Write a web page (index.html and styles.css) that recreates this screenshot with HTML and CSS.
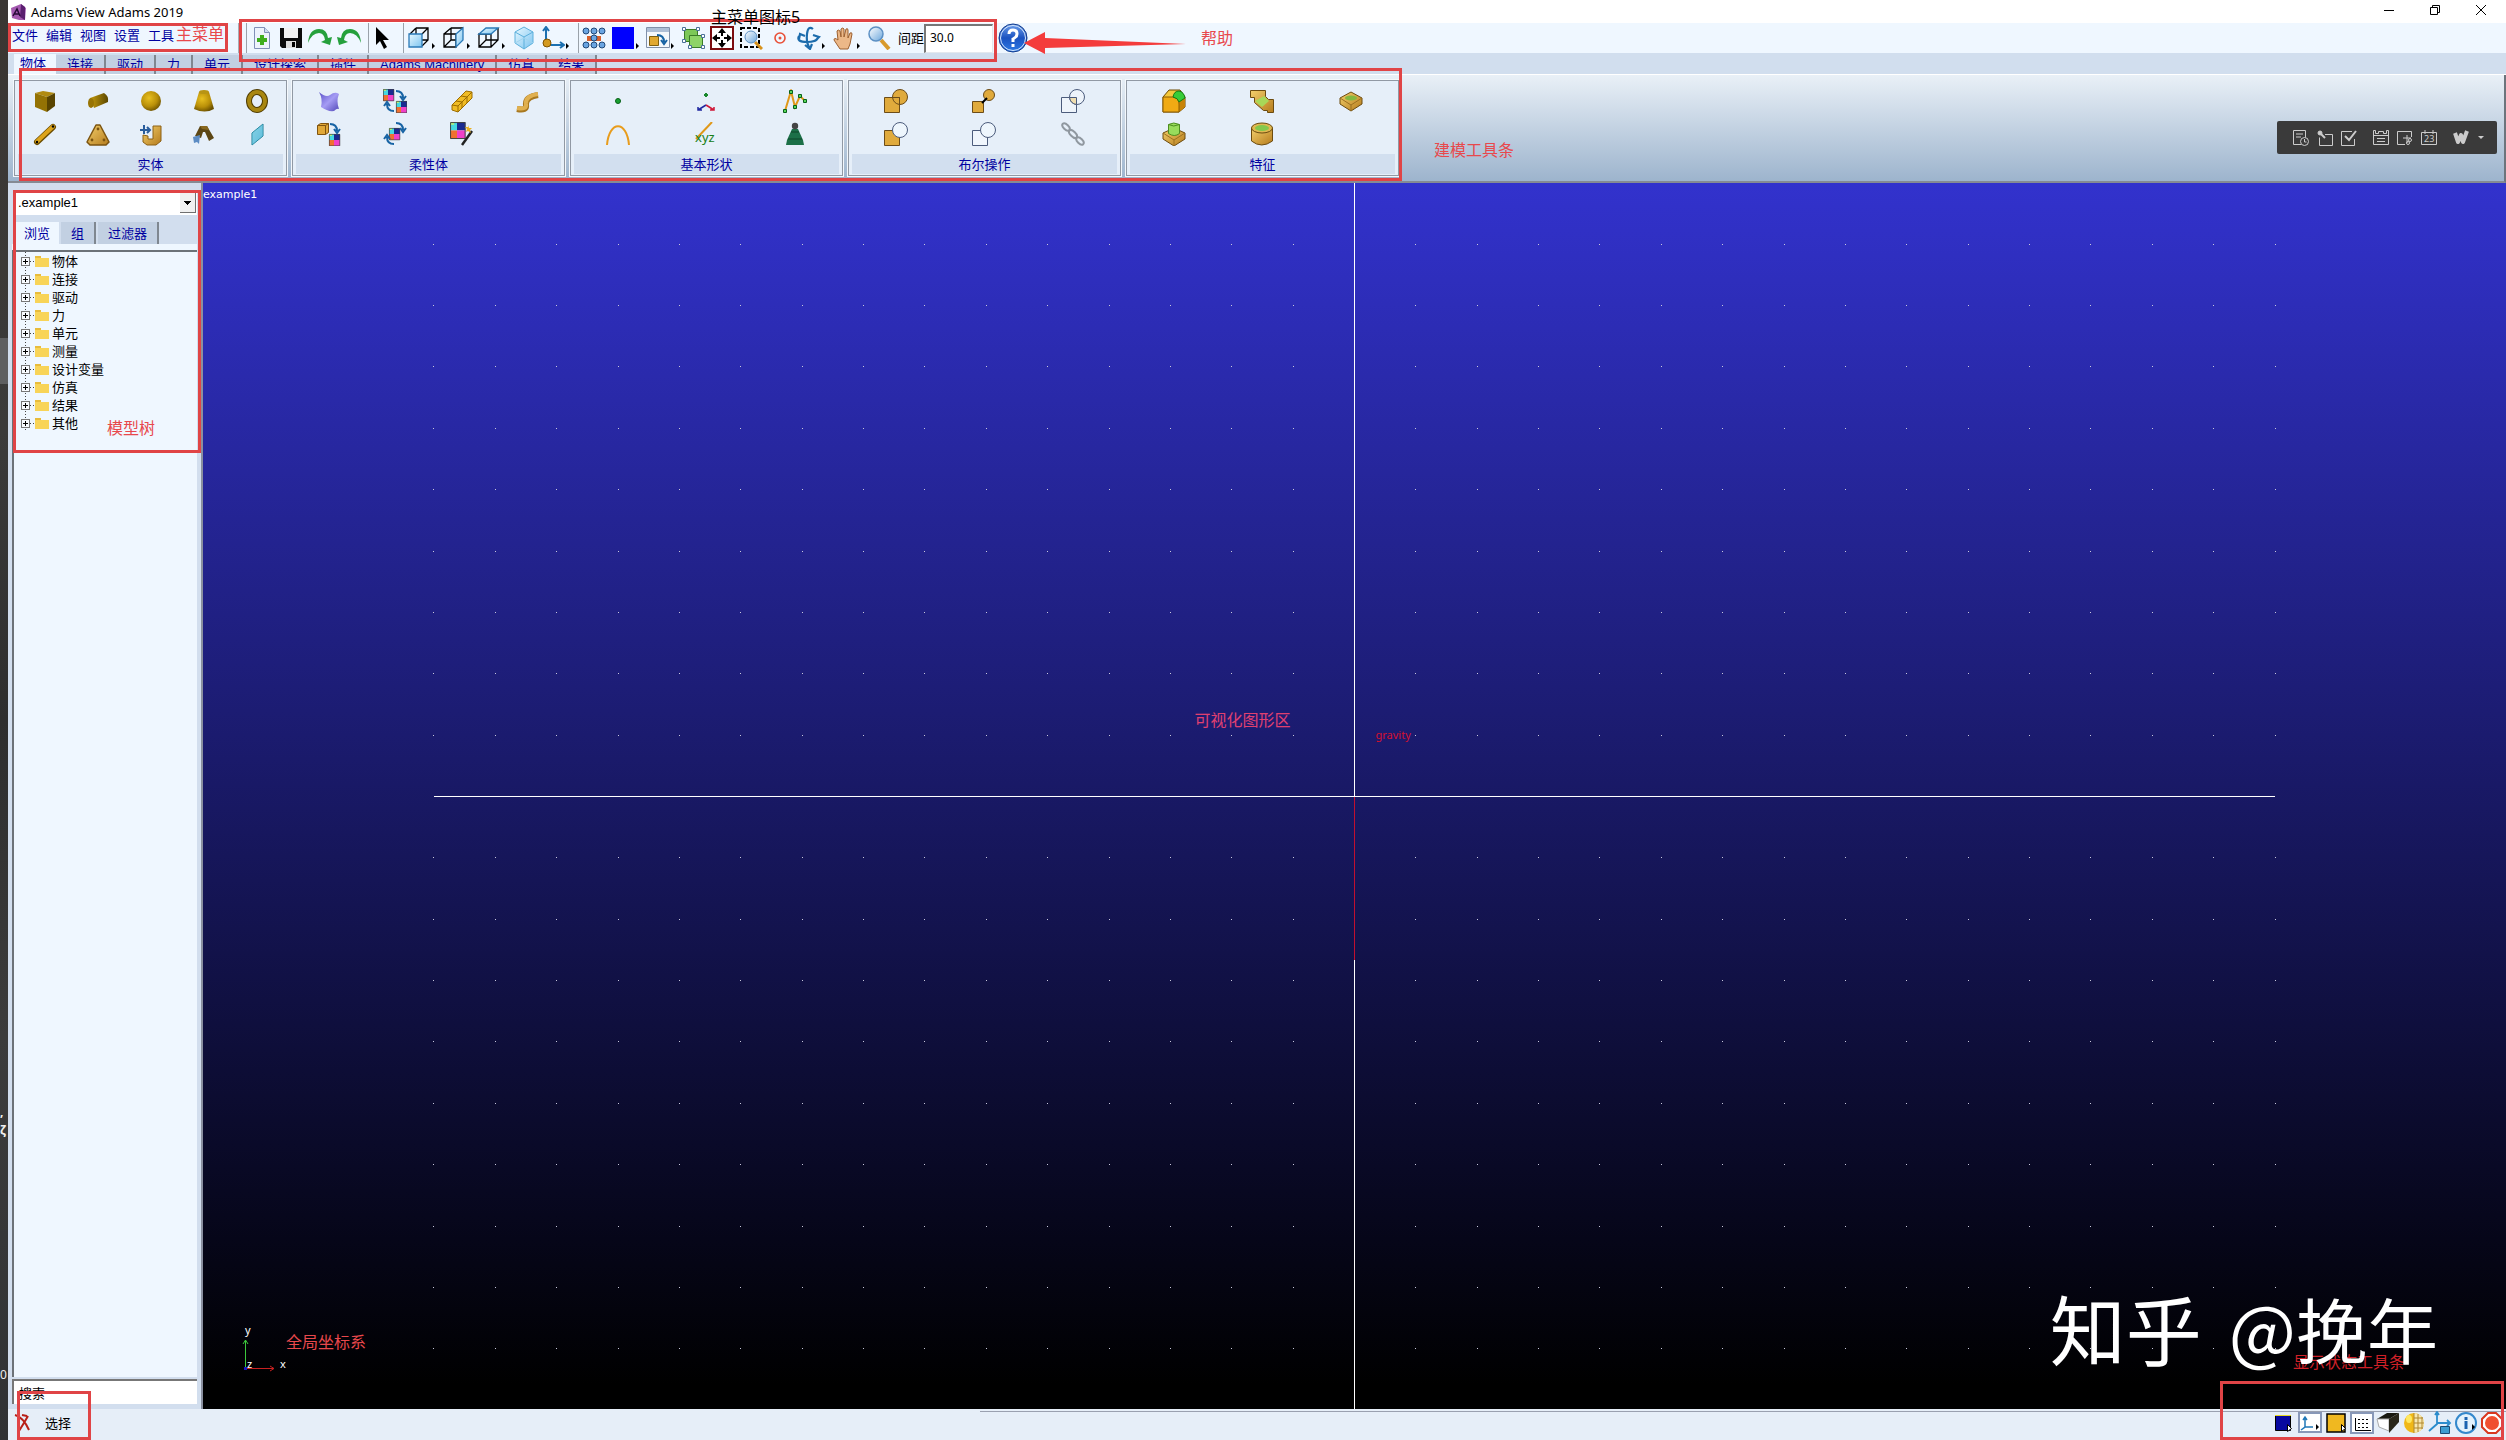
FILE: index.html
```html
<!DOCTYPE html>
<html lang="zh-CN">
<head>
<meta charset="utf-8">
<title>Adams View Adams 2019</title>
<link rel="stylesheet" href="styles.css">
</head>
<body>
<svg class="defs" width="0" height="0" aria-hidden="true">
  <defs>
    <linearGradient id="gold" x1="0" y1="0" x2="1" y2="0"><stop offset="0" stop-color="#c39a0c"/><stop offset="1" stop-color="#5c4700"/></linearGradient>
    <radialGradient id="goldball" cx=".4" cy=".35" r=".7"><stop offset="0" stop-color="#e8c020"/><stop offset=".6" stop-color="#b98f08"/><stop offset="1" stop-color="#6a5000"/></radialGradient>
    <linearGradient id="tan" x1="0" y1="0" x2="1" y2="1"><stop offset="0" stop-color="#f3cf6c"/><stop offset="1" stop-color="#b57b1c"/></linearGradient>
    <linearGradient id="ice" x1="0" y1="0" x2="1" y2="1"><stop offset="0" stop-color="#e8f8ff"/><stop offset="1" stop-color="#7cc4f0"/></linearGradient>
    <linearGradient id="violet" x1="0" y1="0" x2="1" y2="1"><stop offset="0" stop-color="#5a50c8"/><stop offset=".5" stop-color="#a59cf4"/><stop offset="1" stop-color="#5248b8"/></linearGradient>
    <linearGradient id="lens" x1="0" y1="0" x2="1" y2="1"><stop offset="0" stop-color="#ffffff"/><stop offset="1" stop-color="#6aa6dc"/></linearGradient>
    <linearGradient id="helpblue" x1="0" y1="0" x2="0" y2="1"><stop offset="0" stop-color="#6ea0ec"/><stop offset=".5" stop-color="#1b52c0"/><stop offset="1" stop-color="#2f7be6"/></linearGradient>
    <g id="mosaic"><path fill="#45d8e0" d="M0 0h5v6H0z"/><path fill="#1a2a90" d="M5 0h6v6H5z"/><path fill="#f07030" d="M0 6h5v6H0z"/><path fill="#f040c8" d="M5 6h6v6H5z"/><path fill="#b0f080" d="M0 0h3v2H0z"/><path fill="none" stroke="#444" stroke-width=".7" d="M.4.4h10.400v11.400H.4z"/></g>
    <path id="cw" fill="none" stroke="#1763a4" stroke-width="2" d="M0 1q7 0 7 7M4 6l3 4 3-4"/>
  </defs>
</svg>

<aside class="edge" aria-hidden="true"><i class="edge-thumb"></i><span class="edge-a">,</span><span class="edge-b">ζ</span><span class="edge-c">0</span></aside>

<div class="app">
  <header class="titlebar">
    <svg width="16" height="18" viewBox="0 0 16 18"><path fill="#a45ab0" d="M1 5l10-4 5 4-1 12-6 0-7-2z"/><path fill="#5b1f70" d="M11 1l4 3v13l-5-3z"/><path fill="none" stroke="#260a35" stroke-width="1.500" d="M3 13l4-7 3 7M4 11h5"/></svg>
    <h1>Adams View Adams 2019</h1>
    <div class="window-controls">
      <button aria-label="最小化"><svg width="12" height="12"><path d="M1 6.500h10" stroke="#000"/></svg></button>
      <button aria-label="还原"><svg width="12" height="12" fill="none" stroke="#000"><path d="M1.500 3.500h7v7h-7zM3.500 3.500v-2h7v7h-2"/></svg></button>
      <button aria-label="关闭"><svg width="12" height="12" fill="none" stroke="#000"><path d="M1 1l10 10M11 1L1 11"/></svg></button>
    </div>
  </header>

  <div class="menurow">
    <nav class="menu"><button>文件</button><button>编辑</button><button>视图</button><button>设置</button><button>工具</button></nav>
    <div class="toolbar">
      <div class="tools">
        <button aria-label="新建"><svg viewBox="0 0 24 24"><path fill="#edf3fc" stroke="#8090b8" d="M4.500 1.500h10l5 5v16h-15z"/><path fill="#cfdcf0" stroke="#8090b8" d="M14.500 1.500v5h5"/><path stroke="#3fae1e" stroke-width="4" d="M12 9v10M7 14h10"/></svg></button>
        <button aria-label="保存"><svg viewBox="0 0 24 24"><path fill="#0c0c0c" d="M1 2h22v20H3l-2-2z"/><path fill="#f2f2f2" d="M5 2h14v10H5z"/><path fill="#ddd" d="M7 15h10v7H7z"/><path fill="#000" d="M13 16h3v5h-3z"/></svg></button>
        <button aria-label="重做"><svg viewBox="0 0 24 24"><path fill="#25a03c" d="M0 17Q1 3 11 3q8 0 9 9l4-1-2 8-9-3 4-2q-1-7-6-7Q4 7 0 17z"/></svg></button>
        <button aria-label="撤销"><svg viewBox="0 0 24 24"><path fill="#25a03c" d="M24 17Q23 3 13 3q-8 0-9 9l-4-1 2 8 9-3-4-2q1-7 6-7 7 0 11 10z"/></svg></button>
      </div>
      <div class="tools">
        <button aria-label="选择"><svg viewBox="0 0 24 24"><path d="M4 1v18l4-4 4 8 3-2-4-7h6z"/></svg></button>
      </div>
      <div class="tools">
        <button class="drop" aria-label="前视图"><svg viewBox="0 0 24 24"><path fill="none" stroke="#000" stroke-width="1.300" d="M9 2h12v12l-6 6M21 2l-6 6M9 2L3 8M9 2v12h12M9 14l-6 6"/><path fill="url(#ice)" stroke="#2a7ab8" stroke-width="1.300" d="M2 8h13v13H2z"/></svg></button>
        <button class="drop" aria-label="右视图"><svg viewBox="0 0 24 24"><path fill="none" stroke="#000" stroke-width="1.300" d="M2 8h12v13H2zM9 2L2 8M9 2v12h12M9 14l-7 7M9 2h12"/><path fill="url(#ice)" stroke="#2a7ab8" stroke-width="1.300" d="M14 8l7-6v12l-7 7z"/></svg></button>
        <button class="drop" aria-label="顶视图"><svg viewBox="0 0 24 24"><path fill="none" stroke="#000" stroke-width="1.300" d="M2 8h12v13H2zM9 2v12h12M9 14l-7 7M21 2v12l-7 7"/><path fill="url(#ice)" stroke="#2a7ab8" stroke-width="1.300" d="M2 8l7-6h12l-7 6z"/></svg></button>
        <button aria-label="等轴视图"><svg viewBox="0 0 24 24"><path fill="url(#ice)" stroke="#5cb0dc" d="M12 1l9 5v11l-9 6-9-6V6z"/><path fill="none" stroke="#5cb0dc" d="M3 6l9 5 9-5M12 11v12"/><path fill="none" stroke="#a0d4ee" d="M3 17l9-5 9 5"/></svg></button>
        <button class="drop" aria-label="坐标系"><svg viewBox="0 0 24 24"><path fill="none" stroke="#1c70b0" stroke-width="2" d="M5 18V3M5 19h17M2 5l3-4 3 4M19 16l4 3-4 3"/><circle cx="6" cy="17" r="4" fill="#d49a20" stroke="#805400"/></svg></button>
      </div>
      <div class="tools">
        <button aria-label="组"><svg viewBox="0 0 24 24"><path fill="#d8602c" d="M5 10h5v5H5zM14 10h5v5h-5z"/><g fill="#6aa5e2" stroke="#204878"><circle cx="4" cy="5" r="3"/><circle cx="12" cy="5" r="3"/><circle cx="20" cy="5" r="3"/><circle cx="12" cy="12" r="3"/><circle cx="4" cy="19" r="3"/><circle cx="12" cy="19" r="3"/><circle cx="20" cy="19" r="3"/></g></svg></button>
        <button class="drop" aria-label="背景颜色"><svg viewBox="0 0 24 24"><path fill="#0000fe" d="M1 1h22v22H1z"/></svg></button>
        <button class="drop" aria-label="窗口"><svg viewBox="0 0 24 24"><path fill="#f4f8fc" stroke="#8090a8" d="M.5 1.500h23v20H.5z"/><path fill="#aebfd6" d="M1 2h22v4H1z"/><path fill="#e0a830" stroke="#806010" d="M3.500 10.500h9v9h-9z"/><use href="#cw" transform="translate(11 8)"/></svg></button>
        <button aria-label="对齐"><svg viewBox="0 0 24 24"><path fill="#7cc858" stroke="#3a7c28" d="M3.500 3.500h13v12h-13z"/><path fill="#8ed468" stroke="#3a7c28" d="M8.500 9.500h13v12h-13z"/><path fill="#fff" stroke="#4a7098" d="M1.500 1.500h3v3h-3zM15.500 1.500h3v3h-3zM1.500 13.500h3v3h-3zM7.500 19.500h3v3h-3zM20.500 8.500h3v3h-3zM20.500 19.500h3v3h-3z"/></svg></button>
        <button aria-label="适合窗口"><svg viewBox="0 0 24 24"><path fill="#fff" stroke="#7c0c10" stroke-width="2" d="M1 1h22v22H1z"/><path d="M12 2l4 5h-3v3h-2V7H8zM12 22l-4-5h3v-3h2v3h3zM2 12l5-4v3h3v2H7v3zM22 12l-5 4v-3h-3v-2h3V8z"/></svg></button>
        <button aria-label="窗口缩放"><svg viewBox="0 0 24 24"><path fill="none" stroke="#000" stroke-width="2" stroke-dasharray="4 2" d="M2 2h18v19H2z"/><path stroke="#d8921c" stroke-width="3" d="M16 16l7 7"/><circle cx="12" cy="11" r="6" fill="url(#lens)" stroke="#5c90c4"/></svg></button>
        <button aria-label="中心"><svg viewBox="0 0 24 24"><circle cx="12" cy="12" r="5" fill="none" stroke="#e85038" stroke-width="1.600"/><circle cx="12" cy="12" r="1.500" fill="#e85038"/></svg></button>
        <button class="drop" aria-label="旋转"><svg viewBox="0 0 24 24"><g fill="none" stroke="#1c6cac" stroke-width="2.200"><path d="M16 3q-5-4-6 5-1 10 3 14M2 10q-3 6 8 6 9 0 11-4M8 19l5 4 2-5M18 15l4-4-6-2"/><path d="M2 13l1-5 5 2"/></g></svg></button>
        <button class="drop" aria-label="平移"><svg viewBox="0 0 24 24"><path fill="#ecb888" stroke="#9c6030" d="M8 23l-6-9q0-3 4 0L5 5q1-2 3 0l1 6V3q2-2 3 0v8l2-8q2-1 2 1v8l2-5q2-1 2 1l-2 10-2 5z"/></svg></button>
        <button aria-label="缩放"><svg viewBox="0 0 24 24"><path stroke="#d89a2c" stroke-width="4" d="M14 14l8 9"/><circle cx="9" cy="8" r="7" fill="url(#lens)" stroke="#5c90c4" stroke-width="1.500"/></svg></button>
      </div>
      <label class="spacing" for="spacing">间距</label><input id="spacing" class="spacing-input" value="30.0">
      <button class="help" aria-label="帮助"><svg viewBox="0 0 32 30"><circle cx="16" cy="15" r="14" fill="url(#helpblue)" stroke="#143c8c"/><circle cx="16" cy="15" r="12.500" fill="none" stroke="#d8e8fc"/><path fill="none" stroke="#fff" stroke-width="3" d="M12 11q0-4 4-4t4 4q0 3-4 5v3M16 21v3"/></svg></button>
    </div>
  </div>

  <nav class="tabs">
    <button class="active">物体</button><button>连接</button><button>驱动</button><button>力</button><button>单元</button><button>设计探索</button><button>插件</button><button>Adams Machinery</button><button>仿真</button><button>结果</button>
  </nav>

  <section class="ribbon">
    <div class="group cols5">
      <div class="icons">
        <button aria-label="立方体"><svg viewBox="0 0 24 24"><path fill="#b08a10" d="M2 4l8-2 12 2-8 4z"/><path fill="#947204" d="M2 4l12 4v15L2 18z"/><path fill="#594400" d="M14 8l8-4v13l-8 6z"/></svg></button>
        <button aria-label="圆柱"><svg viewBox="0 0 24 24"><path fill="url(#gold)" d="M4 9l14-5q5 3 4 9L8 19z"/><ellipse cx="5" cy="14" rx="3" ry="5" fill="#987404"/></svg></button>
        <button aria-label="球"><svg viewBox="0 0 24 24"><circle cx="12" cy="12" r="10" fill="url(#goldball)"/></svg></button>
        <button aria-label="圆台"><svg viewBox="0 0 24 24"><path fill="url(#goldball)" d="M7 3h10l5 17q-9 5-20 0z"/><ellipse cx="12" cy="3" rx="5" ry="2" fill="#b89414"/></svg></button>
        <button aria-label="圆环"><svg viewBox="0 0 24 24"><ellipse cx="12" cy="12" rx="8" ry="9" fill="none" stroke="#503c00" stroke-width="6"/><ellipse cx="12" cy="12" rx="8" ry="9" fill="none" stroke="#a88610" stroke-width="4"/></svg></button>
        <button aria-label="连杆"><svg viewBox="0 0 24 24"><path stroke="#6a4c00" stroke-width="6" stroke-linecap="round" d="M4 20L20 5"/><path stroke="#dca41c" stroke-width="4" stroke-linecap="round" d="M4 19.500L20 4.500"/><circle cx="4" cy="20" r="1.200"/><circle cx="20" cy="4.500" r="1.200"/></svg></button>
        <button aria-label="板"><svg viewBox="0 0 24 24"><path fill="url(#tan)" stroke="#7c5410" stroke-width="1.500" stroke-linejoin="round" d="M10 3h4l9 17-3 3H4l-3-3z"/><g fill="#7c5410"><circle cx="12" cy="7" r="1.400"/><circle cx="6" cy="18" r="1.400"/><circle cx="18" cy="18" r="1.400"/></g></svg></button>
        <button aria-label="拉伸"><svg viewBox="0 0 24 24"><path fill="url(#tan)" stroke="#8c6014" d="M14 4h8v15l-5 4H8l-4-3v-7l5 1v3h5z"/><path fill="none" stroke="#285c9c" stroke-width="2" d="M1 8h10M8 5l3 3-3 3M5 3v9"/></svg></button>
        <button aria-label="旋转体"><svg viewBox="0 0 24 24"><path fill="#5c4614" d="M3 14L8 4h7l7 12-5 3-4-9h-2l-2 6z"/><path fill="#886820" d="M8 4h7l2 4-7-1z"/><path fill="#5c8cc4" d="M1 15l7-2-1 9-2-2-3 1z"/></svg></button>
        <button aria-label="平面"><svg viewBox="0 0 24 24"><path fill="url(#ice)" stroke="#1c7890" d="M7 11L18 2v12L7 23z"/><path fill="#48b8d0" opacity=".6" d="M7 11L18 2v12L7 23z"/></svg></button>
      </div>
      <h2>实体</h2>
    </div>
    <div class="group cols4">
      <div class="icons">
        <button aria-label="柔性面"><svg viewBox="0 0 24 24"><path fill="url(#violet)" d="M2 3q7 6 11 3 5-4 9-1-3 7 0 15-2-1-5 2-6 1-13-4 2-8-2-15z"/></svg></button>
        <button aria-label="刚转柔"><svg viewBox="0 0 24 24"><use href="#mosaic"/><use href="#mosaic" x="13" y="12"/><use href="#cw" transform="translate(13 1)"/><use href="#cw" transform="rotate(180 5 12) translate(-1 1)"/></svg></button>
        <button aria-label="离散柔性连杆"><svg viewBox="0 0 24 24"><path fill="#f0bc24" stroke="#9c6c00" d="M2 16L16 2l6 1v6L8 23l-6-2z"/><path fill="none" stroke="#9c6c00" d="M2 16l6 1L22 3M8 17v6M6 12l6 1v6M11 7l6 1v6"/></svg></button>
        <button aria-label="柔性梁"><svg viewBox="0 0 24 24"><path fill="none" stroke="#a87820" stroke-width="6" d="M1 20q10 2 9-4-1-8 12-10"/><path fill="none" stroke="#e0b050" stroke-width="4" d="M1 19q10 2 9-4-1-8 12-10"/></svg></button>
        <button aria-label="替换"><svg viewBox="0 0 24 24"><path fill="#e0a838" stroke="#805410" d="M.5 3.500l3-2h8v9l-3 2h-8z"/><path fill="none" stroke="#805410" d="M.5 3.500h8v9M8.500 3.500l3-2"/><use href="#mosaic" x="12" y="12"/><use href="#cw" transform="translate(13 1)"/></svg></button>
        <button aria-label="交换"><svg viewBox="0 0 24 24"><use href="#mosaic" x="6" y="6"/><use href="#cw" transform="translate(13 0)"/><use href="#cw" transform="rotate(180 5 12) translate(-1 1)"/></svg></button>
        <button aria-label="柔性体向导"><svg viewBox="0 0 24 24"><use href="#mosaic" transform="scale(1.400)"/><path stroke="#222" stroke-width="2.500" d="M12 23L22 9"/><path fill="#e8b020" d="M18 3l1 3 3 0-2 2 1 3-3-2-2 1 1-3-2-2h3z"/></svg></button>
      </div>
      <h2>柔性体</h2>
    </div>
    <div class="group cols3">
      <div class="icons">
        <button aria-label="点"><svg viewBox="0 0 24 24"><circle cx="12" cy="12" r="2.500" fill="#18a030" stroke="#086018"/></svg></button>
        <button aria-label="标记点"><svg viewBox="0 0 24 24"><path stroke="#18882c" stroke-width="2" d="M12 4v4M10 6h4"/><path fill="none" stroke="#2028a0" stroke-width="1.500" d="M12 16l-8 5M4 18v3h4"/><path fill="none" stroke="#d01838" stroke-width="1.500" d="M12 16l8 5M20 18v3h-4"/></svg></button>
        <button aria-label="折线"><svg viewBox="0 0 24 24"><path fill="none" stroke="#e09818" stroke-width="2" d="M2 22L8 2l4 16 5-11 5 5"/><g fill="#58d858" stroke="#086018"><path d="M.5 20.500h3v3h-3zM6.500 1.500h3v3h-3zM10.500 16.500h3v3h-3zM15.500 5.500h3v3h-3zM20.500 10.500h3v3h-3z"/></g></svg></button>
        <button aria-label="圆弧"><svg viewBox="0 0 24 24"><path fill="none" stroke="#e89c1c" stroke-width="2" d="M1 23C3-2 21-2 23 23"/></svg></button>
        <button aria-label="样条"><svg viewBox="0 0 24 24"><path stroke="#e09818" stroke-width="2" d="M2 17L18 0"/><text x="1" y="20" class="xyz">xyz</text></svg></button>
        <button aria-label="质量点"><svg viewBox="0 0 24 24"><path fill="#1c7048" d="M9 7h6l5 11 1 5H3l1-5z"/><path fill="none" stroke="#0c4428" d="M8 10h8M5 17h14"/><circle cx="12" cy="4" r="3.200" fill="#444"/></svg></button>
      </div>
      <h2>基本形状</h2>
    </div>
    <div class="group cols3">
      <div class="icons">
        <button aria-label="合并"><svg viewBox="0 0 24 24"><g fill="#e0aa3c" stroke="#6c4c18"><circle cx="16" cy="8" r="7.500"/><path d="M.5 8.500h15v15H.5z"/><path fill="none" d="M15.500 8.500v7q-6-1-7-7z"/></g></svg></button>
        <button aria-label="联接"><svg viewBox="0 0 24 24"><g fill="#e0aa3c" stroke="#6c4c18"><circle cx="17" cy="6" r="5.500"/><path d="M.5 12.500h11v11H.5z"/></g><path stroke="#000" stroke-width="2" d="M10 14l5-5"/></svg></button>
        <button aria-label="交集"><svg viewBox="0 0 24 24"><g fill="#eef4fb" stroke="#4c5c7c"><path d="M.5 8.500h15v15H.5z"/><circle cx="16" cy="8" r="7.500"/><path fill="#f0deb0" d="M15.500 8.500v7q-6-1-7-7z"/></g></svg></button>
        <button aria-label="切割"><svg viewBox="0 0 24 24"><path fill="#e0aa3c" stroke="#6c4c18" d="M.5 8.500h15v15H.5z"/><circle cx="16" cy="8" r="7.500" fill="#eef6fd" stroke="#4c5c7c"/></svg></button>
        <button aria-label="分割"><svg viewBox="0 0 24 24"><path fill="#f0f6fd" stroke="#4c5c7c" d="M.5 8.500h15v15H.5z"/><circle cx="16" cy="8" r="7.500" fill="#eef6fd" stroke="#4c5c7c"/></svg></button>
        <button aria-label="链"><svg viewBox="0 0 24 24"><g fill="none" stroke="#9098a0" stroke-width="2"><ellipse cx="5" cy="5" rx="4.500" ry="2.500" transform="rotate(45 5 5)"/><ellipse cx="12" cy="12" rx="5" ry="2.500" transform="rotate(45 12 12)"/><ellipse cx="19" cy="19" rx="4.500" ry="2.500" transform="rotate(45 19 19)"/></g></svg></button>
      </div>
      <h2>布尔操作</h2>
    </div>
    <div class="group cols3">
      <div class="icons">
        <button aria-label="倒圆"><svg viewBox="0 0 24 24"><path fill="#f4c83c" stroke="#6c4800" d="M1 8l6-7h11l5 7v10l-6 5H1z"/><path fill="#c88408" d="M17 12l6-4v10l-6 5z"/><path fill="#f0aa14" stroke="#8c5c00" d="M1 8h10q6 1 6 7v8H1z"/><path fill="#38cc38" stroke="#147c14" d="M11 8q1-6 6-6 5 1 6 7l-6 4q-1-4-6-5z"/></svg></button>
        <button aria-label="倒角"><svg viewBox="0 0 24 24"><path fill="url(#tan)" stroke="#6c4c10" d="M.5 1.500h15v6l3 3h5v13h-6v-2h-4l-9-8v-5h-4z"/><path fill="#a8d858" d="M5 12l9-5 5 5-7 6z"/></svg></button>
        <button aria-label="打孔"><svg viewBox="0 0 24 24"><path fill="url(#tan)" stroke="#6c4c10" d="M12 3l11 6v6l-11 7-11-7V9z"/><path fill="none" stroke="#9c7020" d="M1 9l11 7 11-7M12 16v6"/><ellipse cx="12" cy="9" rx="6" ry="2.500" fill="#84b840"/></svg></button>
        <button aria-label="凸台"><svg viewBox="0 0 24 24"><path fill="url(#tan)" stroke="#6c4c10" d="M12 6l11 5v6l-11 7-11-7v-6z"/><path fill="none" stroke="#9c7020" d="M1 11l11 7 11-7M12 18v6"/><path fill="#98dc5c" stroke="#4c8c20" d="M6.500 2.500q5-3 11 0v9q-5 4-11 0z"/><path fill="none" stroke="#4c8c20" d="M6.500 2.500q5 3 11 0"/></svg></button>
        <button aria-label="抽壳"><svg viewBox="0 0 24 24"><path fill="url(#tan)" stroke="#6c4c10" d="M1.500 6v13q10 8 21 0V6z"/><ellipse cx="12" cy="6" rx="10.500" ry="5" fill="#e0b850" stroke="#6c4c10"/><ellipse cx="12" cy="6" rx="7" ry="3" fill="#84c84c"/></svg></button>
      </div>
      <h2>特征</h2>
    </div>

    <div class="floatbar">
      <button aria-label="最近"><svg viewBox="0 0 16 16"><path d="M8 14.500H.5v-14h12v7M3 4h7M3 7h5"/><circle cx="11.500" cy="11.500" r="4"/><path d="M11.500 9v3h2"/></svg></button>
      <button aria-label="便签"><svg viewBox="0 0 16 16"><path d="M8 4.500h7.500v11h-13v-8"/><circle cx="3" cy="3" r="2" fill="#ccc"/><path stroke-width="2" d="M4 4l4 4"/></svg></button>
      <button aria-label="待办"><svg viewBox="0 0 16 16"><path d="M11 1.500H.5v14h13V9"/><path stroke-width="2" d="M4 6l4 4 7-9"/></svg></button>
      <button class="spaced" aria-label="清单"><svg viewBox="0 0 16 16"><path d="M.5.500h2v3h3v-2h5v2h3v-3h2v14H.5zM.5 5.500h15M4 8.500h8M4 11.500h8"/></svg></button>
      <button aria-label="截图"><svg viewBox="0 0 16 16"><path d="M8 14.500H.5v-13h14V7M6 8h8M10 5v8"/><circle cx="13" cy="10" r="1.500"/><circle cx="11" cy="13" r="1.500"/></svg></button>
      <button aria-label="日历"><svg viewBox="0 0 16 16"><path d="M.5 2.500h15v12H.5zM4 0v4M12 0v4"/><text x="3" y="12" class="day">23</text></svg></button>
      <button class="spaced" aria-label="W"><svg viewBox="0 0 16 16"><path stroke-width="4" stroke-linejoin="round" d="M2 3l3 9 3-7 2 7 4-11"/></svg></button>
      <button class="more" aria-label="更多"><svg viewBox="0 0 8 8"><path fill="#ccc" stroke="none" d="M1 2h6L4 5z"/></svg></button>
    </div>
  </section>

  <main class="work">
    <aside class="side">
      <select class="model" aria-label="模型"><option>.example1</option></select>
      <nav class="side-tabs"><button class="active">浏览</button><button>组</button><button>过滤器</button></nav>
      <ul class="tree">
        <li>物体</li><li>连接</li><li>驱动</li><li>力</li><li>单元</li><li>测量</li><li>设计变量</li><li>仿真</li><li>结果</li><li>其他</li>
      </ul>
      <input class="search" aria-label="搜索" value="搜索">
    </aside>
    <section class="view">
      <svg class="scene" viewBox="-1151 -613 2303 1226" preserveAspectRatio="xMidYMid slice" shape-rendering="crispEdges">
        <g id="dots" fill="#c8c8dc"></g>
        <path stroke="#fff" d="M-920 .5H921M.5-613V613"/>
        <path stroke="#c01030" d="M.5 1V164"/>
      </svg>
      <span class="model-name">example1</span>
      <span class="gravity">gravity</span>
      <svg class="triad" width="50" height="50" viewBox="0 0 50 50">
        <path fill="none" stroke="#3cc83c" d="M7.500 42V14M5 18l2.500-4 2.500 4"/><path fill="none" stroke="#c82020" d="M8 42.500h28M32 40l4 2.500-4 2.500"/><path fill="#1818c0" d="M6 41h3v3H6z"/>
        <text x="7" y="8">y</text><text x="9" y="42">z</text><text x="42" y="42">x</text>
      </svg>
      <p class="note note-view">可视化图形区</p>
      <p class="note note-triad">全局坐标系</p>
      <p class="note note-status">显示状态工具条</p>
      <p class="watermark"><b>知乎</b><span>@挽年</span></p>
    </section>
  </main>

  <footer class="status">
    <svg class="cancel" width="18" height="18" viewBox="0 0 18 18"><path fill="none" stroke="#b82018" stroke-width="2" d="M1 1q8 2 14 15M14 2Q10 9 5 17M8 1l5 1"/></svg>
    <button class="pick">选择</button>
    <div class="status-tools">
      <button aria-label="背景"><svg viewBox="0 0 24 24"><path fill="#0808a0" stroke="#000" d="M3.500 4.500h15v15h-15z"/><path stroke="#e8d820" d="M3 4.500h16"/><path fill="#fff" stroke="#000" d="M15.500 13.500v7l4-3z"/></svg></button>
      <button aria-label="坐标显示"><svg viewBox="0 0 24 24"><path fill="#fff" stroke="#8898b8" stroke-width="2" d="M1 2h22v19H1z"/><path fill="none" stroke="#2078b8" stroke-width="1.500" d="M7 7v9l-4 3M7 16h8M5 9l2-3 2 3"/><path d="M18 13v6l3-3z"/></svg></button>
      <button aria-label="渲染"><svg viewBox="0 0 24 24"><path fill="#f0b820" stroke="#000" stroke-width="1.500" d="M3 3h18v18H3z"/><path fill="#fff" stroke="#000" d="M17.500 13.500v7l4-3z"/></svg></button>
      <button aria-label="网格"><svg viewBox="0 0 24 24"><path fill="#fff" stroke="#8898b8" stroke-width="2" d="M1 2h22v20H1z"/><path fill="none" stroke="#000" d="M5.500 7v12.500H21"/><path stroke="#000" stroke-dasharray="2 2" d="M8 8.500h11M8 12.500h11M8 16.500h11"/></svg></button>
      <button aria-label="透视"><svg viewBox="0 0 24 24"><path fill="#181810" d="M1 8l10-6h12l-10 6z"/><path fill="#fff" stroke="#aaa" d="M1 8h12v12L3 16z"/><path fill="#28261a" d="M13 8l10-6v9l-10 11z"/></svg></button>
      <button aria-label="线框"><svg viewBox="0 0 24 24"><circle cx="12" cy="12" r="10" fill="#f0b818"/><path fill="#f8e8b0" d="M12 2a10 10 0 0 1 0 20z"/><path fill="none" stroke="#b08830" d="M12 2v20M16 3v18M20 6v12M12 7h9M12 12h10M12 17h9"/><ellipse cx="7" cy="8" rx="3" ry="4" fill="#ffe860"/></svg></button>
      <button aria-label="图标显示"><svg viewBox="0 0 24 24"><path fill="none" stroke="#2c8ccc" stroke-width="1.800" d="M9 2v11l-8 7M9 12h13M7 4l2-3 2 3M19 9l3 3-3 3"/><path fill="#3c9cd0" stroke="#1c4c74" d="M12.500 15.500h9v7h-9z"/></svg></button>
      <button aria-label="信息"><svg viewBox="0 0 24 24"><circle cx="12" cy="12" r="10" fill="#e4f2fc" stroke="#3488cc" stroke-width="2"/><path stroke="#1c64b0" stroke-width="3" d="M12 6v3M12 10v8"/><path d="M18 13v6l3-3z"/></svg></button>
      <button aria-label="停止"><svg viewBox="0 0 24 24"><path fill="#fff" stroke="#d83820" stroke-width="2" d="M8 2h8l6 6v8l-6 6H8l-6-6V8z"/><circle cx="12" cy="12" r="7" fill="#f05030"/></svg></button>
    </div>
  </footer>

  <div class="frame frame-menu"></div>
  <div class="frame frame-toolbar"></div>
  <div class="frame frame-ribbon"></div>
  <div class="frame frame-tree"></div>
  <div class="frame frame-pick"></div>
  <div class="frame frame-status"></div>
  <p class="note note-menu">主菜单</p>
  <p class="note note-icons">主菜单图标5</p>
  <p class="note note-help">帮助</p>
  <p class="note note-ribbon">建模工具条</p>
  <p class="note note-tree">模型树</p>
  <svg class="help-arrow" width="162" height="22"><path fill="#f43c3c" d="M0 11L21 0v6l141 6-141 4v6z"/></svg>
</div>
<script src="grid.js"></script>
</body>
</html>
```
FILE: styles.css
```css
* { box-sizing: border-box; }
body {
  margin: 0;
  display: flex;
  min-height: 100vh;
  font: 13px/18px "Noto Sans", "Noto Sans CJK SC", sans-serif;
  color: #000;
  background: #e6eef8;
}
button {
  padding: 0;
  border: 0;
  background: none;
  font: inherit;
  color: #0000a0;
}
h1, h2, p, ul { margin: 0; padding: 0; font-weight: 400; }
svg { display: block; }
.defs { position: absolute; }

/* strip of the desktop left of the window */
.edge {
  position: relative;
  flex: 0 0 8px;
  overflow: hidden;
  background: linear-gradient(#3a3632, #3b3b3a 30%, #2e2e2e 50%, #3c3c3c 72%, #303234);
  color: #eee;
}
.edge-thumb { position: absolute; top: 338px; left: 0; width: 8px; height: 46px; background: #5e5f60; }
.edge span { position: absolute; left: 0; font-size: 12px; }
.edge-a { top: 1103px; font-weight: 700; }
.edge-b { top: 1122px; font-weight: 700; }
.edge-c { top: 1366px; }

.app {
  position: relative;
  flex: 1;
  min-width: 0;
  display: flex;
  flex-direction: column;
}

.titlebar {
  display: flex;
  align-items: center;
  gap: 5px;
  height: 23px;
  padding-left: 2px;
  background: #fff;
}
.titlebar h1 { font-size: 13px; line-height: 22px; }
.window-controls { display: flex; margin-left: auto; padding: 0 2px 4px 0; }
.window-controls button { width: 46px; display: flex; justify-content: center; }

.menurow { display: flex; height: 30px; background: #eff7ff; }
.menu {
  flex: 0 0 231px;
  display: flex;
  gap: 8px;
  padding: 1px 0 0 4px;
  border-right: 1px solid #a8aeb6;
}
.menu button { height: 22px; }
.toolbar { display: flex; align-items: center; padding-left: 7px; }
.tools { display: flex; padding: 0 2px 0 3px; border-left: 1px solid #9aa2aa; }
.tools button { position: relative; width: 29px; height: 30px; }
.tools .drop { width: 35px; }
.tools svg { width: 24px; height: 24px; }
.drop::after {
  content: "";
  position: absolute;
  left: 25px;
  bottom: 4px;
  border: solid transparent;
  border-width: 3px 0 3px 3px;
  border-left-color: #000;
}
.spacing { width: 26px; }
.spacing-input {
  width: 69px;
  height: 29px;
  padding: 0 0 2px 4px;
  border: 1px solid #e4e8ee;
  border-top: 2px solid #777;
  border-left: 2px solid #777;
  background: #fff;
  font: 12px "Noto Sans", sans-serif;
}
.help { position: relative; width: 36px; padding-left: 4px; }
.help svg { width: 32px; height: 30px; }

.tabs {
  display: flex;
  height: 22px;
  padding-left: 6px;
  background: #d1deee;
  border-bottom: 1px solid #fff;
  font-family: "Liberation Sans", "Noto Sans CJK SC", sans-serif;
}
.tabs button {
  height: 19px;
  margin-top: 2px;
  padding: 0 11px;
  background: #c2d0e2;
  border-right: 2px solid #7f8790;
}
.tabs .active { height: 20px; margin-top: 1px; padding: 0 10px 0 6px; background: #eff7ff; border: 0; }

.ribbon {
  position: relative;
  display: flex;
  gap: 5px;
  height: 108px;
  padding: 5px 0 5px 6px;
  border-right: 2px solid #6c747c;
  border-bottom: 2px solid #858b94;
  background: linear-gradient(#e9f0f7, #9db4cd);
}
.group {
  flex: 0 0 273px;
  display: flex;
  flex-direction: column;
  padding: 3px 3px 1px;
  border: 1px solid #9199a4;
  outline: 1px solid #f4f8fc;
  background: #e6eff9;
}
.icons { flex: 1; display: grid; grid-template-rows: 33px 33px; align-items: center; justify-items: center; }
.cols5 .icons { grid-template-columns: repeat(5, 1fr); }
.cols4 .icons { grid-template-columns: repeat(4, 1fr); }
.cols3 .icons { grid-template-columns: repeat(3, 1fr); }
.icons svg { width: 24px; height: 24px; }
.group h2 { height: 20px; font-size: 13px; line-height: 20px; text-align: center; color: #0000a0; background: #d2dfef; }
.xyz { font: 13px "Noto Sans", sans-serif; fill: #188018; }

.floatbar {
  position: absolute;
  right: 7px;
  top: 46px;
  display: flex;
  align-items: center;
  gap: 8px;
  height: 33px;
  padding: 0 12px 0 16px;
  border-radius: 2px;
  background: #3a3a3a;
}
.floatbar svg { width: 16px; height: 16px; fill: none; stroke: #ccc; }
.floatbar .spaced { margin-left: 8px; }
.floatbar .more svg { width: 8px; height: 8px; }
.day { font: 9px "Noto Sans", sans-serif; fill: #ccc; stroke: none; }

.work { flex: 1; display: flex; }
.side {
  flex: 0 0 195px;
  min-width: 0;
  display: flex;
  flex-direction: column;
  padding: 8px 4px 5px;
  border-right: 2px solid #8a90a0;
  background: #d2deee;
}
.model {
  appearance: none;
  height: 24px;
  margin-left: 2px;
  padding: 0 4px;
  border: 0;
  border-radius: 0;
  font: 13px/24px "Liberation Sans", sans-serif;
  background:
    linear-gradient(#000, #000) right 6px top 10px / 7px 1px no-repeat,
    linear-gradient(#000, #000) right 7px top 11px / 5px 1px no-repeat,
    linear-gradient(#000, #000) right 8px top 12px / 3px 1px no-repeat,
    linear-gradient(#000, #000) right 9px top 13px / 1px 1px no-repeat,
    linear-gradient(#707070, #707070) right 1px top 2px / 1px 20px no-repeat,
    linear-gradient(#707070, #707070) right 1px bottom 2px / 16px 1px no-repeat,
    linear-gradient(#f0f0f0, #f0f0f0) right 1px top 2px / 16px 20px no-repeat,
    #fff;
}
.side-tabs { display: flex; gap: 2px; height: 35px; padding: 7px 0 6px 3px; border-bottom: 6px solid #eff7ff; }
.side-tabs button { height: 22px; padding: 0 10px; background: #c2d0e2; border-right: 2px solid #7f8790; }
.side-tabs .active { padding: 0 9px; background: #eff7ff; border: 0; }
.tree {
  flex: 1;
  padding-left: 7px;
  list-style: none;
  background: #eff7ff;
  border: solid #6c7278;
  border-width: 2px 0 0 2px;
}
.tree li {
  height: 18px;
  padding-left: 31px;
  background:
    linear-gradient(#000, #000) 2px 9px / 5px 1px no-repeat,
    linear-gradient(#000, #000) 4px 7px / 1px 5px no-repeat,
    linear-gradient(#f8fbff, #f8fbff) 1px 6px / 7px 7px no-repeat,
    linear-gradient(#777, #777) 0 5px / 9px 9px no-repeat,
    linear-gradient(#f8d458, #f8d458) 14px 6px / 14px 9px no-repeat,
    linear-gradient(#e8bc3c, #e8bc3c) 14px 4px / 6px 2px no-repeat,
    repeating-linear-gradient(#444 0 1px, transparent 1px 3px) 4px 0 / 1px 18px no-repeat,
    repeating-linear-gradient(90deg, #444 0 1px, transparent 1px 3px) 9px 9px / 5px 1px no-repeat;
}
.search {
  width: 100%;
  height: 25px;
  margin-top: 2px;
  padding: 0 0 0 5px;
  border: solid #777;
  border-width: 2px 0 0 2px;
  font: inherit;
  background: #fff;
}

.view { position: relative; flex: 1; overflow: hidden; background: linear-gradient(#3232cd, #000 98%); }
.scene { position: absolute; inset: 0; width: 100%; height: 100%; }
.model-name { position: absolute; left: 0; top: 3px; font-family: "DejaVu Sans", sans-serif; font-size: 11px; color: #fff; }
.gravity { position: absolute; left: calc(50% + 21px); top: calc(50% - 70px); font-size: 11px; color: #d41030; }
.triad { position: absolute; left: 35px; bottom: 33px; overflow: visible; fill: #fff; font: 11px "Noto Sans", sans-serif; }

.status {
  position: relative;
  flex: 0 0 31px;
  display: flex;
  align-items: center;
  padding: 0 2px 3px 6px;
  background:
    linear-gradient(#9aa0b0, #9aa0b0) right 0 top 2px / calc(100% - 972px) 1px no-repeat,
    #e6eef8;
}
.pick { margin-left: 13px; color: #000; }
.status-tools { display: flex; gap: 2px; margin-left: auto; }
.status-tools svg { width: 24px; height: 24px; }

/* review marks laid over the window */
.frame { position: absolute; border: 3px solid #e04446; pointer-events: none; }
.frame-menu { left: 0; top: 23px; width: 220px; height: 29px; }
.frame-toolbar { left: 231px; top: 19px; width: 758px; height: 43px; }
.frame-ribbon { left: 11px; top: 68px; width: 1383px; height: 113px; }
.frame-tree { left: 5px; top: 190px; width: 188px; height: 263px; }
.frame-pick { left: 9px; bottom: 0; width: 74px; height: 49px; }
.frame-status { right: 2px; bottom: 0; width: 284px; height: 59px; }
.note { position: absolute; font-size: 16px; line-height: 20px; color: #e8484c; white-space: nowrap; }
.note-menu { left: 168px; top: 24px; }
.note-icons { left: 703px; top: 7px; color: #000; }
.note-help { left: 1193px; top: 28px; }
.note-ribbon { left: 1426px; top: 140px; }
.note-tree { left: 99px; top: 418px; }
.note-view { left: calc(50% - 160px); top: calc(50% - 86px); color: #e04070; }
.note-triad { left: 83px; bottom: 57px; }
.note-status { right: 101px; bottom: 37px; color: #d02028; }
.help-arrow { position: absolute; left: 1016px; top: 32px; }
.watermark {
  position: absolute;
  right: 68px;
  bottom: 32px;
  display: flex;
  gap: 27px;
  font-family: "Noto Sans CJK SC", sans-serif;
  font-size: 71px;
  line-height: 100px;
  color: #fff;
}
.watermark b { font-size: 76px; font-weight: 400; }
```
FILE: grid.js
```js
// Working grid: 31 x 19 points, one every 61.37 units, none on the axes.
const pitch = 61.37;
const ns = "http://www.w3.org/2000/svg";
const layer = document.getElementById("dots");
for (let row = -9; row <= 9; row++) {
  for (let col = -15; col <= 15; col++) {
    if (row === 0 || col === 0) continue;
    const dot = document.createElementNS(ns, "rect");
    dot.setAttribute("x", Math.round(col * pitch));
    dot.setAttribute("y", Math.round(row * pitch));
    dot.setAttribute("width", 1);
    dot.setAttribute("height", 1);
    layer.append(dot);
  }
}
```
